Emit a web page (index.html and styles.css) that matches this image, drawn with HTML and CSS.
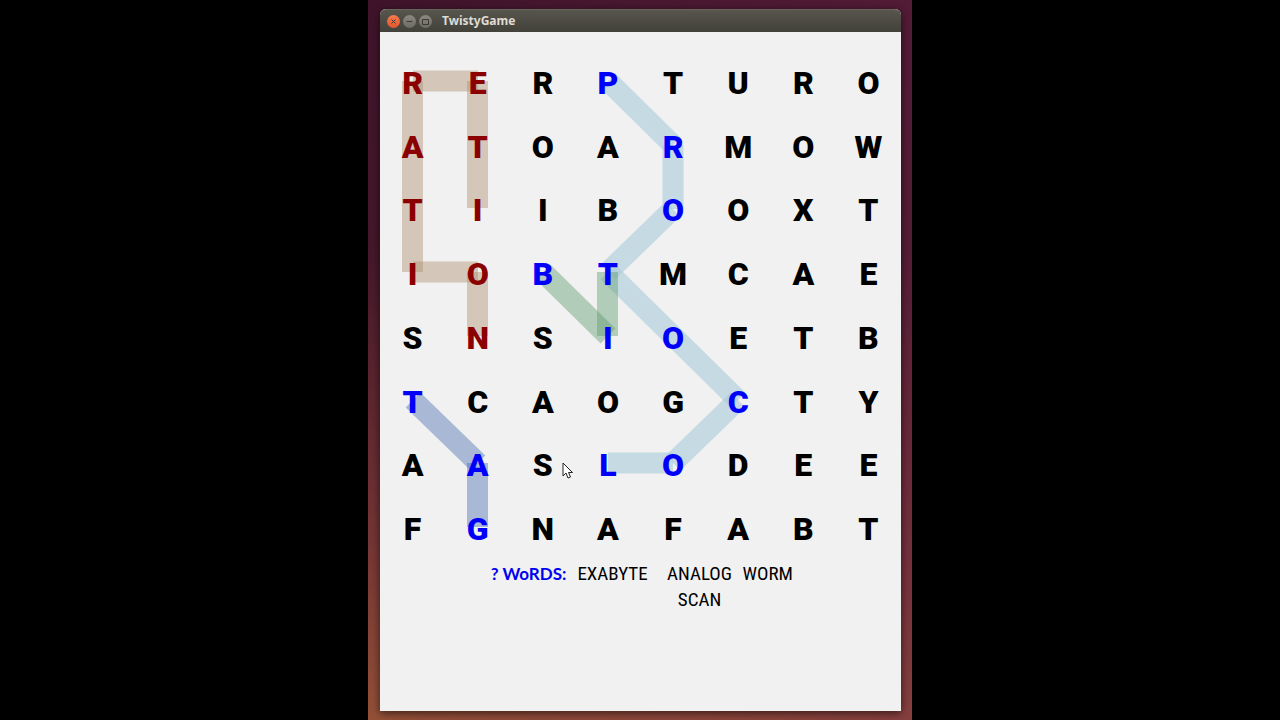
FILE: index.html
```html
<!DOCTYPE html>
<html lang="en">
<head>
<meta charset="utf-8">
<title>TwistyGame</title>
<link rel="stylesheet" href="styles.css">
</head>
<body>
<main class="desktop">
  <section class="window">
    <header class="titlebar">
      <button class="control close" aria-label="Close"><svg viewBox="0 0 13 13"><path d="M4.5 4.5l4 4M8.5 4.5l-4 4"/></svg></button>
      <button class="control" aria-label="Minimize"><svg viewBox="0 0 13 13"><path d="M3.5 6.5h6"/></svg></button>
      <button class="control" aria-label="Maximize"><svg viewBox="0 0 13 13"><path d="M3.500 4.500h6v5h-6z"/></svg></button>
      <h1 class="title">TwistyGame</h1>
    </header>
    <div class="board">
      <svg class="trails" viewBox="0 0 521 510" preserveAspectRatio="none" aria-hidden="true">
        <g class="trail brown">
          <path d="M97.500 157V30"/><path d="M98 30H33"/><path d="M32.500 30V221"/><path d="M33 221H98"/><path d="M97.500 221V285"/>
        </g>
        <g class="trail cyan">
          <path d="M228 30L293 94"/><path d="M293 94V158"/><path d="M293 158L228 221"/><path d="M228 221L358 349"/><path d="M358 349L293 412"/><path d="M293 412H228"/>
        </g>
        <g class="trail green"><path d="M163 221L228 285"/><path d="M227.500 285V221"/></g>
        <g class="trail blue"><path d="M33 349L98 412"/><path d="M97.500 412V476"/></g>
      </svg>
      <div class="letters">
        <span class="done">R</span><span class="done">E</span><span>R</span><span class="found">P</span><span>T</span><span>U</span><span>R</span><span>O</span>
        <span class="done">A</span><span class="done">T</span><span>O</span><span>A</span><span class="found">R</span><span>M</span><span>O</span><span>W</span>
        <span class="done">T</span><span class="done">I</span><span>I</span><span>B</span><span class="found">O</span><span>O</span><span>X</span><span>T</span>
        <span class="done">I</span><span class="done">O</span><span class="found">B</span><span class="found">T</span><span>M</span><span>C</span><span>A</span><span>E</span>
        <span>S</span><span class="done">N</span><span>S</span><span class="found">I</span><span class="found">O</span><span>E</span><span>T</span><span>B</span>
        <span class="found">T</span><span>C</span><span>A</span><span>O</span><span>G</span><span class="found">C</span><span>T</span><span>Y</span>
        <span>A</span><span class="found">A</span><span>S</span><span class="found">L</span><span class="found">O</span><span>D</span><span>E</span><span>E</span>
        <span>F</span><span class="found">G</span><span>N</span><span>A</span><span>F</span><span>A</span><span>B</span><span>T</span>
      </div>
      <svg class="pointer" viewBox="0 0 11 17" aria-hidden="true"><path d="M1 1v13l3-3 2 5 2.500-1-2-4.500h4z"/></svg>
    </div>
    <div class="words">
      <span class="label">? WoRDS:</span><span>EXABYTE</span><span>ANALOG</span><span>WORM</span>
      <span class="second">SCAN</span>
    </div>
  </section>
</main>
</body>
</html>
```
FILE: styles.css
```css
* { box-sizing: border-box; }
body { margin: 0; background: #000; color: #000; font-family: Roboto, sans-serif; }
.desktop {
  display: flex;
  max-width: 544px;
  min-height: 100vh;
  margin: 0 auto;
  padding: 9px 11px 9px 12px;
  background: linear-gradient(90deg, transparent, rgba(112, 38, 72, .4)), linear-gradient(#3f142b, #45172a 35%, #743535 75%, #935037);
}
.window {
  flex: 1;
  min-width: 0;
  border-radius: 6px 6px 0 0;
  background: #f1f1f1;
  box-shadow: 0 2px 9px rgba(0, 0, 0, .6);
}
.titlebar {
  display: flex;
  align-items: center;
  gap: 3px;
  height: 23px;
  padding: 0 7px;
  border-radius: 6px 6px 0 0;
  border-top: 1px solid #67655b;
  background: linear-gradient(#57554c, #42413a);
}
.control {
  width: 13px;
  height: 13px;
  padding: 0;
  border: 0;
  border-radius: 50%;
  background: linear-gradient(#8b8980, #6c6b63);
}
.control svg { display: block; fill: none; stroke: #3b3a34; }
.close { background: linear-gradient(#f37b51, #e2562d); }
.title { margin: 0 0 0 7px; font: 700 12px/16px "Noto Sans", sans-serif; color: #dfdbd2; }
.board { position: relative; margin-top: 19px; }
.trails { position: absolute; inset: 0; width: 100%; height: 100%; }
.trail { fill: none; stroke-width: 21; }
.trail path { stroke-opacity: .4; }
.brown { stroke: #ab8a67; }
.green { stroke: #54976a; }
.blue { stroke: #3f65ab; }
.cyan { stroke: #a8cbd9; }
.cyan path { stroke-opacity: .6; }
.letters {
  position: relative;
  display: grid;
  grid-template: repeat(8, 1fr) / repeat(8, 1fr);
  align-items: center;
  aspect-ratio: 521 / 510;
  font: 900 32px/60px Roboto, sans-serif;
  text-align: center;
}
.done { color: #8b0000; }
.found { color: #0000fa; }
.pointer { position: absolute; left: 35%; top: 80.5%; width: 11px; height: 17px; fill: #fff; stroke: #222; }
.words {
  display: grid;
  grid-template-columns: 80px 88px 86px 50px;
  justify-content: center;
  font: 19px/26px "Roboto Condensed", sans-serif;
  text-align: center;
}
.label { font: 700 17px/26px Lato, sans-serif; color: #0000f0; }
.second { grid-column: 3; }
```
